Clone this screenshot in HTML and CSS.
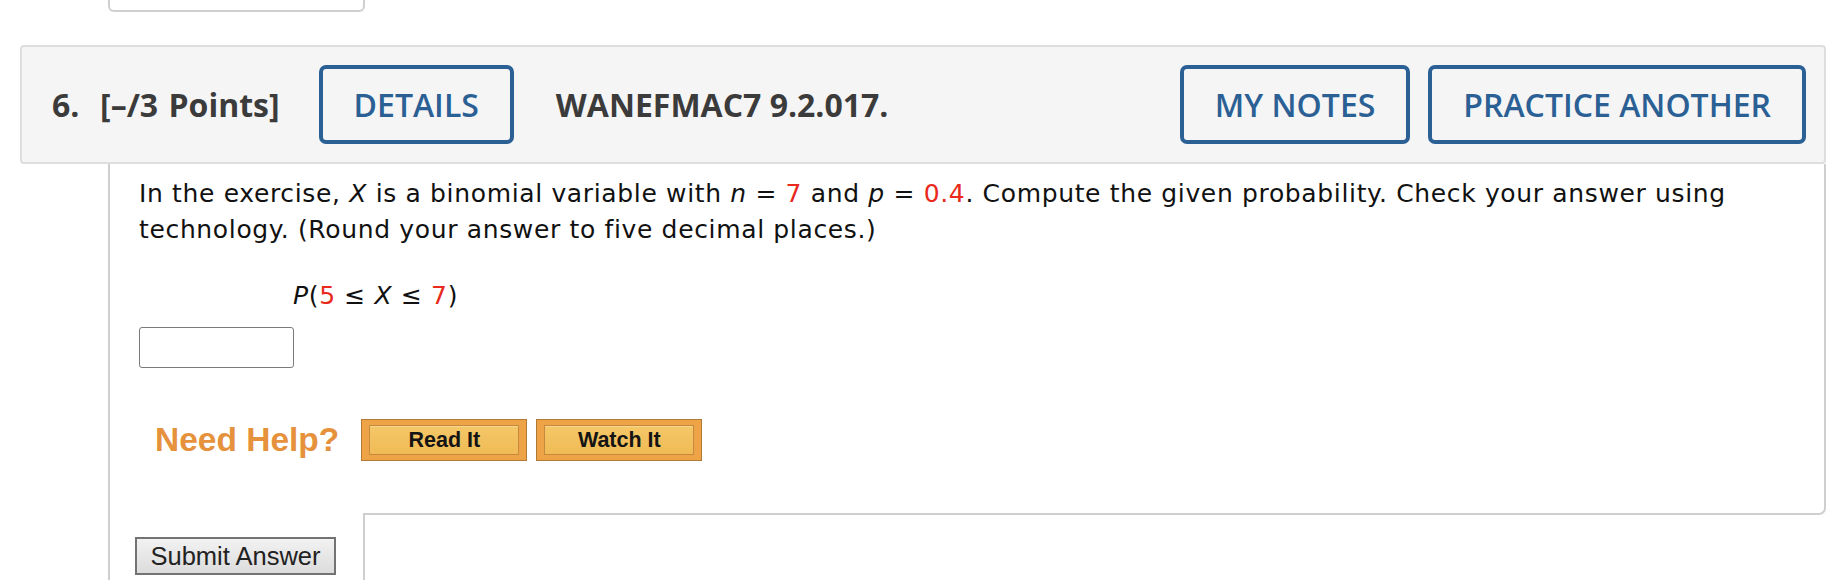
FILE: index.html
```html
<!DOCTYPE html>
<html lang="en">

<head>
    <meta charset="UTF-8">
    <meta name="viewport" content="width=device-width, initial-scale=1.0">
    <title>Question 6</title>
    <link rel="stylesheet" href="styles.css">
</head>

<body>
    <!-- tail of the previous question -->
    <div class="prev-tab"></div>

    <div class="question">
        <div class="q-head">
            <span class="q-title">6.&nbsp; [–/3 Points]</span>
            <button class="head-btn">DETAILS</button>
            <span class="q-code">WANEFMAC7 9.2.017.</span>
            <div class="head-right">
                <button class="head-btn">MY NOTES</button>
                <button class="head-btn">PRACTICE ANOTHER</button>
            </div>
        </div>

        <div class="q-body">
            <p class="q-text">
                In the exercise, <i>X</i> is a binomial variable with <i>n</i> = <span class="red">7</span> and
                <i>p</i> = <span class="red">0.4</span>. Compute the given probability. Check your answer using
                technology. (Round your answer to five decimal places.)
            </p>
            <p class="q-math"><i>P</i>(<span class="red">5</span> ≤ <i>X</i> ≤ <span class="red">7</span>)</p>
            <input class="answer" type="text">

            <div class="help">
                <span class="help-label">Need Help?</span>
                <button class="help-btn"><span>Read It</span></button>
                <button class="help-btn"><span>Watch It</span></button>
            </div>
        </div>

        <div class="submit-tab">
            <button class="submit">Submit Answer</button>
        </div>
    </div>
</body>

</html>
```

FILE: styles.css
```css
* {
    margin: 0;
    padding: 0;
    box-sizing: border-box;
}

body {
    background: #fff;
    padding: 0 14px 0 20px;
    font-family: "DejaVu Sans", Verdana, sans-serif;
    overflow: hidden;
}

.prev-tab {
    margin-left: 88px;
    width: 257px;
    height: 12px;
    border: 2px solid #cfcfcf;
    border-top: none;
    border-radius: 0 0 6px 6px;
}

.question {
    margin-top: 33px;
}

/* header bar */
.q-head {
    display: flex;
    align-items: center;
    height: 119px;
    padding: 0 18px 0 30px;
    background: #f5f5f5;
    border: 2px solid #dedede;
    border-radius: 4px;
    font-family: "Open Sans", sans-serif;
}

.q-title,
.q-code {
    font-size: 32px;
    font-weight: 700;
    color: #3b3b3b;
}

.q-title {
    white-space: pre;
    word-spacing: 2px;
}

.q-code {
    margin-left: 42px;
}

.head-btn {
    height: 79px;
    padding: 0 31px;
    background: #f5f5f5;
    border: 4px solid #2b6095;
    border-radius: 7px;
    font-family: "Open Sans", sans-serif;
    font-size: 32px;
    font-weight: 600;
    color: #2b6095;
    cursor: pointer;
}

.q-title + .head-btn {
    margin-left: 39px;
}

.head-right {
    display: flex;
    gap: 18px;
    margin-left: auto;
}

/* question body */
.q-body {
    margin-left: 88px;
    height: 351px;
    padding: 12px 0 0 29px;
    border: 2px solid #cfcfcf;
    border-top: none;
    border-radius: 0 0 7px 0;
    font-size: 25px;
    letter-spacing: 0.65px;
    line-height: 36px;
    color: #111;
}

.red {
    color: #e8291c;
}

.q-math {
    margin: 30px 0 0 154px;
}

.answer {
    display: block;
    margin-top: 13px;
    width: 155px;
    height: 41px;
    border: 1.5px solid #7a7a7a;
    border-radius: 3px;
    background: #fff;
}

.help {
    display: flex;
    align-items: center;
    margin: 51px 0 0 16px;
    letter-spacing: 0;
}

.help-label {
    font-family: "Liberation Sans", Arial, sans-serif;
    font-size: 33.5px;
    font-weight: 700;
    color: #e6913c;
    margin-right: 22px;
}

.help-btn {
    width: 166px;
    height: 42px;
    margin-right: 9px;
    padding: 5px 7px;
    background: #eea446;
    border: 1px solid #b07a36;
    cursor: pointer;
}

.help-btn span {
    display: block;
    height: 100%;
    background: linear-gradient(#f4c768, #f0bb55);
    border: 1px solid #c58a3e;
    box-shadow: inset 0 1px 0 #f8d78c;
    font-family: "Liberation Sans", Arial, sans-serif;
    font-size: 21.5px;
    font-weight: 700;
    line-height: 29px;
    color: #141414;
}

/* submit tab hanging below the body */
.submit-tab {
    margin: -2px 0 0 88px;
    width: 257px;
    height: 80px;
    padding: 24px 0 0 25px;
    background: #fff;
    border-left: 2px solid #cfcfcf;
    border-right: 2px solid #cfcfcf;
}

.submit {
    width: 201px;
    height: 38px;
    background: linear-gradient(#f2f2f2, #dcdcdc);
    border: 2px solid #737373;
    font-family: "Liberation Sans", Arial, sans-serif;
    font-size: 25.5px;
    color: #222;
    cursor: pointer;
}
```
